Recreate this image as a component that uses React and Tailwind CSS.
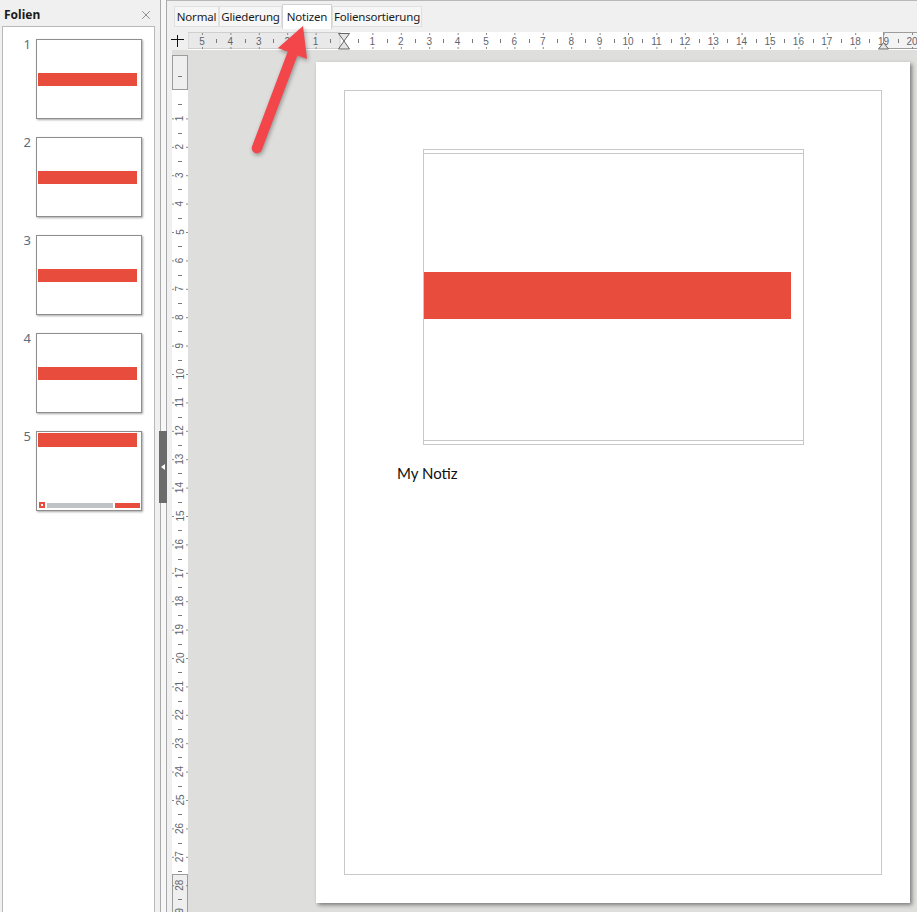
import React from 'react';
import { X } from 'lucide-react';

const CM = 28.4;

function SlideThumb({ num, last }) {
  return (
    <div className="flex items-start gap-[5px] pl-[18px]">
      <span className="w-[10px] text-right text-[13px] leading-none mt-[-1px] text-[#5b6b7b]">{num}</span>
      <div className="w-[106px] h-[80px] bg-white border border-[#8e8e8e] shadow-[1px_1px_2px_rgba(0,0,0,0.35)] flex flex-col">
        {last ? (
          <>
            <div className="mt-[1px] ml-[1px] w-[99px] h-[14px] bg-[#e74c3c]" />
            <div className="mt-[55px] flex items-center ml-[2px] gap-[2px]">
              <div className="w-[6px] h-[6px] bg-[#e74c3c] flex items-center justify-center">
                <div className="w-[2px] h-[2px] bg-white" />
              </div>
              <div className="w-[66px] h-[5px] bg-[#bdc3c7]" />
              <div className="w-[25px] h-[5px] bg-[#e74c3c]" />
            </div>
          </>
        ) : (
          <div className="mt-[33px] ml-[1px] w-[99px] h-[13px] bg-[#e74c3c]" />
        )}
      </div>
    </div>
  );
}

function HRuler() {
  const origin = 156;
  const marks = [];
  for (let n = -5; n <= 20; n++) {
    const x = origin + n * CM;
    if (n !== 0) {
      marks.push(
        <text key={'n' + n} x={x} y={12.5} textAnchor="middle" fontSize="10" fill="#5f656c" fontFamily="'Liberation Sans', sans-serif">
          {Math.abs(n)}
        </text>
      );
      marks.push(<line key={'a' + n} x1={x + 0.5} x2={x + 0.5} y1={1} y2={3} stroke="#8a8a8a" />);
      marks.push(<line key={'b' + n} x1={x + 0.5} x2={x + 0.5} y1={15} y2={17} stroke="#8a8a8a" />);
    }
    const h = Math.round(x + CM / 2) + 0.5;
    marks.push(<line key={'h' + n} x1={h} x2={h} y1={7} y2={11} stroke="#7a7a7a" />);
  }
  return (
    <svg width="729" height="18" className="block">
      <rect x="0" y="0" width="729" height="18" fill="#ffffff" />
      <rect x="0" y="0.5" width="152" height="16" fill="#e9e9e9" stroke="#cfcfcf" />
      <rect x="695.5" y="0.5" width="40" height="16" fill="#f3f3f3" stroke="#9c9c9c" />
      {marks}
      <path d="M150.5 1.5 L161.5 1.5 L156 9 L161.5 17 L150.5 17 L156 9 Z" fill="#e4e4e4" stroke="#666" />
      <path d="M690.5 17 L700.5 17 L695.5 10.5 Z" fill="#e4e4e4" stroke="#666" />
    </svg>
  );
}

function VRuler() {
  const origin = 35;
  const marks = [];
  for (let n = 0; n <= 29; n++) {
    const y = origin + n * CM;
    if (n !== 0) {
      marks.push(
        <text key={'n' + n} x={8} y={y} textAnchor="middle" dominantBaseline="central" fontSize="10" fill="#5f656c" fontFamily="'Liberation Sans', sans-serif" transform={`rotate(-90 8 ${y})`}>
          {n}
        </text>
      );
      marks.push(<line key={'a' + n} y1={y + 0.5} y2={y + 0.5} x1={0} x2={2} stroke="#8a8a8a" />);
      marks.push(<line key={'b' + n} y1={y + 0.5} y2={y + 0.5} x1={14} x2={16} stroke="#8a8a8a" />);
    }
    const h = Math.round(y - CM / 2) + 0.5;
    marks.push(<line key={'h' + n} y1={h} y2={h} x1={6} x2={10} stroke="#7a7a7a" />);
  }
  return (
    <svg width="16" height="857" className="block">
      <rect x="0" y="0" width="16" height="857" fill="#ffffff" />
      <rect x="0.5" y="0.5" width="15" height="34" fill="#efefef" stroke="#9c9c9c" />
      <rect x="0.5" y="819.5" width="15" height="50" fill="#efefef" stroke="#9c9c9c" />
      {marks}
    </svg>
  );
}

const tabs = [
  { label: 'Normal', w: 'w-[45px]' },
  { label: 'Gliederung', w: 'w-[63px]' },
  { label: 'Notizen', w: 'w-[50px]', active: true },
  { label: 'Foliensortierung', w: 'w-[90px]' },
];

export default function App() {
  return (
    <div className="relative w-[917px] h-[912px] overflow-hidden flex bg-[#f0f0f0] text-[#1a1a1a] font-['Noto_Sans',sans-serif]">
      {/* Slide pane */}
      <div className="w-[155px] flex flex-col">
        <div className="h-[26px] flex items-center justify-between pl-[4px] pr-[2px] pt-[3px]">
          <span className="text-[12px] font-bold">Folien</span>
          <X size={14} strokeWidth={1.2} className="text-[#666]" />
        </div>
        <div className="flex-1 ml-[2px] bg-white border border-b-0 border-[#b9b9b9] flex flex-col gap-[18px] pt-[12px]">
          {[1, 2, 3, 4, 5].map((n) => (
            <SlideThumb key={n} num={n} last={n === 5} />
          ))}
        </div>
      </div>

      {/* Splitter */}
      <div className="relative w-[12px] flex">
        <div className="w-[5px]" />
        <div className="w-[7px] border-x border-[#a9a9a9] bg-[#f7f7f7]" />
        <div className="absolute left-[4px] top-[431px] w-[8px] h-[72px] bg-[#6b6b6b] flex items-center justify-center">
          <div className="w-0 h-0 border-y-[3px] border-y-transparent border-r-[4px] border-r-white" />
        </div>
      </div>

      {/* Main view */}
      <div className="flex-1 flex flex-col">
        <div className="h-[32px] border-t border-[#b8b8b8] pl-[7px] pt-[5px]">
          <div className="flex items-start">
            {tabs.map((t) =>
              t.active ? (
                <div key={t.label} className={`${t.w} h-[25px] -mt-[2px] bg-white border border-[#d2d2d2] border-b-0 flex items-center justify-center text-[11.5px] tracking-[-0.2px]`}>
                  {t.label}
                </div>
              ) : (
                <div key={t.label} className={`${t.w} h-[21px] bg-[#f6f6f6] border border-[#e0e0e0] flex items-center justify-center text-[11.5px] tracking-[-0.2px]`}>
                  {t.label}
                </div>
              )
            )}
          </div>
        </div>

        <div className="h-[18px] flex">
          <div className="w-[21px] flex items-center justify-center">
            <svg width="14" height="12" className="block">
              <line x1="0" x2="13" y1="4.5" y2="4.5" stroke="#111" />
              <line x1="6.5" x2="6.5" y1="0" y2="12" stroke="#111" />
            </svg>
          </div>
          <HRuler />
        </div>

        <div className="flex-1 flex">
          <div className="w-[5px] bg-[#f0f0f0]" />
          <div className="w-[16px] bg-[#dededc] pt-[5px]">
            <VRuler />
          </div>
          <div className="flex-1 bg-[#dededc] pl-[128px] pt-[12px]">
            <div className="w-[594px] h-[841px] bg-white p-[28px] shadow-[2px_2px_4px_rgba(0,0,0,0.45)]">
              <div className="w-[538px] h-[785px] border border-[#c8c8c8] flex flex-col">
                <div className="ml-[78px] mt-[58px] w-[381px] h-[296px] border border-[#c8c8c8] flex flex-col">
                  <div className="h-[4px] border-b border-[#c8c8c8]" />
                  <div className="flex-1">
                    <div className="mt-[118px] w-[367px] h-[47px] bg-[#e74c3c]" />
                  </div>
                  <div className="h-[4px] border-t border-[#c8c8c8]" />
                </div>
                <p className="ml-[52px] mt-[19px] text-[15px] leading-[18px] text-[#111] font-['Lato',sans-serif]">My Notiz</p>
              </div>
            </div>
          </div>
        </div>
      </div>

      {/* Annotation arrow */}
      <svg width="917" height="912" className="absolute inset-0 pointer-events-none drop-shadow-[1px_2px_2px_rgba(0,0,0,0.35)]">
        <line x1="257" y1="148" x2="292" y2="55" stroke="#f2464b" strokeWidth="10.5" strokeLinecap="round" />
        <polygon points="303,26 278,48 307,59" fill="#f2464b" />
      </svg>
    </div>
  );
}
